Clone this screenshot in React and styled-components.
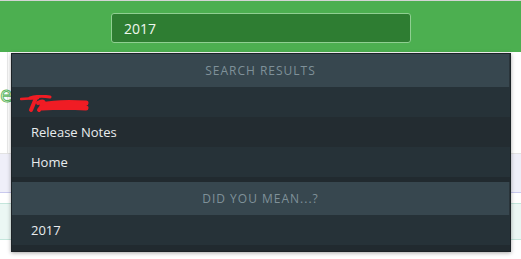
import styled, { createGlobalStyle } from "styled-components";

const GlobalStyle = createGlobalStyle`
  * { box-sizing: border-box; }
  html, body {
    margin: 0;
    padding: 0;
    background: #ffffff;
    font-family: "Open Sans", "Noto Sans", sans-serif;
    overflow: hidden;
  }
`;

const Page = styled.div`
  position: relative;
  width: 521px;
  height: 259px;
  border-top: 1px solid #d4d4d4;
  background: #fafbfb;
`;

const TopBar = styled.header`
  height: 51px;
  background: #4caf50;
  display: flex;
  justify-content: center;
  align-items: center;
  padding-left: 1px;
`;

const SearchInput = styled.input`
  width: 300px;
  height: 30px;
  margin-top: 3px;
  background: #2e7d32;
  border: 1px solid #8fcf91;
  border-radius: 3px;
  color: #eef7ee;
  font-family: "Open Sans", "Noto Sans", sans-serif;
  font-size: 14px;
  padding: 0 12px;
  outline: none;
`;

const Content = styled.main`
  display: flex;
  flex-direction: column;
  background: #ffffff;
`;

const TitleRow = styled.div`
  height: 101px;
  padding-top: 30px;
  font-size: 22px;
  color: transparent;
  -webkit-text-stroke: 1px #5cb85f;
  line-height: 1;
  background: linear-gradient(to right, transparent 7px, #e9e9e9 7px, #e9e9e9 8px, #ffffff 8px);
`;

const Band = styled.div`
  height: ${(p) => p.$h}px;
  background: ${(p) => p.$bg};
  border-top: 1px solid ${(p) => p.$top};
  border-bottom: 1px solid ${(p) => p.$bottom};
`;

const Gap = styled.div`
  height: ${(p) => p.$h}px;
  background: #ffffff;
`;

const Dropdown = styled.div`
  position: absolute;
  top: 52px;
  left: 11px;
  width: 500px;
  background: #212a2f;
  border: 1px solid #1c2327;
  box-shadow: 0 1px 4px rgba(0, 0, 0, 0.35);
  display: flex;
  flex-direction: column;
`;

const SectionHeader = styled.div`
  height: 33px;
  background: #37474f;
  border-right: 1px solid #2a353b;
  display: flex;
  align-items: center;
  justify-content: center;
  color: #7f9199;
  font-size: 12px;
  letter-spacing: 1px;
  text-transform: uppercase;
`;

const List = styled.ul`
  list-style: none;
  margin: 0;
  padding: 0 0 ${(p) => p.$pad}px;
`;

const Row = styled.li`
  height: 30px;
  padding-left: 19px;
  display: flex;
  align-items: center;
  color: #e9ecee;
  font-size: 13px;
  background: ${(p) => (p.$alt ? "#232c31" : "#263238")};
`;

const Scribble = styled.svg`
  flex: none;
  margin-left: -11px;
  margin-top: 4px;
`;

const Redacted = () => (
  <Scribble width="70" height="18" viewBox="0 0 70 18">
    <g fill="none" stroke="#f01c24" strokeLinecap="round" strokeLinejoin="round">
      <path d="M1 4 C 6 3, 12 4, 18 3" strokeWidth="2.5" />
      <path d="M10 3 C 16 1, 24 1, 30 2" strokeWidth="3" />
      <path d="M16 3 L 11 15" strokeWidth="4" />
      <path d="M18 8 C 23 5, 26 7, 22 11 L 19 15" strokeWidth="4" />
      <path d="M22 10 C 34 7, 50 7, 66 8" strokeWidth="5" />
      <path d="M22 13 C 36 12, 52 12, 66 13" strokeWidth="5" />
    </g>
    <path d="M24 7 L 66 6 L 67 15 L 24 15 Z" fill="#f01c24" />
  </Scribble>
);

export default function App() {
  return (
    <>
      <GlobalStyle />
      <Page>
        <TopBar>
          <SearchInput defaultValue="2017" />
        </TopBar>
        <Content>
          <TitleRow>e</TitleRow>
          <Band $h={40} $bg="#efeff9" $top="#e3e3e3" $bottom="#c9c9ee" />
          <Gap $h={10} />
          <Band $h={37} $bg="#ebf7f4" $top="#c4e6dc" $bottom="#c4e6dc" />
          <Gap $h={20} />
        </Content>
        <Dropdown>
          <SectionHeader>Search Results</SectionHeader>
          <List $pad={5}>
            <Row>
              <Redacted />
            </Row>
            <Row $alt>Release Notes</Row>
            <Row>Home</Row>
          </List>
          <SectionHeader>Did you mean...?</SectionHeader>
          <List $pad={6}>
            <Row>2017</Row>
          </List>
        </Dropdown>
      </Page>
    </>
  );
}
